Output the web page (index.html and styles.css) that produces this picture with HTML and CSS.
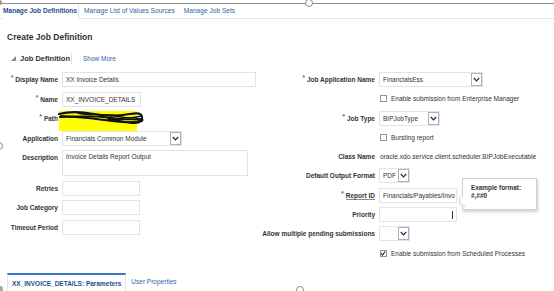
FILE: index.html
```html
<!DOCTYPE html>
<html>
<head>
<meta charset="utf-8">
<link rel="stylesheet" href="styles.css">
</head>
<body>
<div class="page">
  <div class="splitter"><span class="knob knob-top"></span></div>
  <span class="corner-mark"></span>
  <nav class="tabs">
    <a class="tab active">Manage Job Definitions</a>
    <a class="tab">Manage List of Values Sources</a>
    <a class="tab tab-last">Manage Job Sets</a>
  </nav>

  <h1 class="title">Create Job Definition</h1>

  <div class="section-head">
    <svg class="disclosure" width="5" height="5" viewBox="0 0 5 5"><polygon points="5,0 5,5 0,5" fill="#8a8a8a"/></svg>
    <span class="section-title">Job Definition</span>
    <span class="focus-bar"></span>
    <a class="link show-more">Show More</a>
  </div>

  <div class="form">
    <div class="grid grid-left">
      <label class="lbl"><span class="req">*</span>Display Name</label>
      <div class="input w194">XX Invoice Details</div>

      <label class="lbl"><span class="req">*</span>Name</label>
      <div class="input w79">XX_INVOICE_DETAILS</div>

      <label class="lbl"><span class="req">*</span>Path</label>
      <div class="redact">
        <svg width="86" height="22" viewBox="0 0 86 22">
          <rect x="1" y="1" width="78" height="20" fill="#ffff00"/>
          <path d="M1 4 C 12 1, 25 2, 36 4 S 60 6, 72 4 S 84 5, 84 8 S 78 13, 64 12 S 40 9, 30 8 S 10 6, 2 7" fill="none" stroke="#111" stroke-width="2.2" stroke-linecap="round"/>
          <path d="M3 6 C 15 8, 30 5, 45 7 S 70 10, 80 9 S 82 14, 74 13 S 60 10, 50 9" fill="none" stroke="#111" stroke-width="1.8" stroke-linecap="round"/>
          <path d="M20 3 C 30 6, 44 3, 58 6 S 76 8, 83 6" fill="none" stroke="#111" stroke-width="1.6" stroke-linecap="round"/>
        </svg>
      </div>

      <label class="lbl">Application</label>
      <div class="select w120">
        <span class="sel-text">Financials Common Module</span>
        <span class="sel-btn"><svg width="7" height="5" viewBox="0 0 7 5"><polyline points="0.8,1 3.5,3.8 6.2,1" fill="none" stroke="#1c2b45" stroke-width="1.2"/></svg></span>
      </div>

      <label class="lbl">Description</label>
      <div class="input textarea w186">Invoice Details Report Output</div>

      <label class="lbl">Retries</label>
      <div class="input w78"></div>

      <label class="lbl">Job Category</label>
      <div class="input w78"></div>

      <label class="lbl">Timeout Period</label>
      <div class="input w78"></div>
    </div>

    <div class="grid grid-right">
      <label class="lbl"><span class="req">*</span>Job Application Name</label>
      <div class="select w104">
        <span class="sel-text">FinancialsEss</span>
        <span class="sel-btn"><svg width="7" height="5" viewBox="0 0 7 5"><polyline points="0.8,1 3.5,3.8 6.2,1" fill="none" stroke="#1c2b45" stroke-width="1.2"/></svg></span>
      </div>

      <span class="lbl"></span>
      <label class="check"><span class="box"></span>Enable submission from Enterprise Manager</label>

      <label class="lbl"><span class="req">*</span>Job Type</label>
      <div class="select w61">
        <span class="sel-text">BIPJobType</span>
        <span class="sel-btn"><svg width="7" height="5" viewBox="0 0 7 5"><polyline points="0.8,1 3.5,3.8 6.2,1" fill="none" stroke="#1c2b45" stroke-width="1.2"/></svg></span>
      </div>

      <span class="lbl"></span>
      <label class="check"><span class="box"></span>Bursting report</label>

      <label class="lbl">Class Name</label>
      <div class="value">oracle.xdo.service.client.scheduler.BIPJobExecutable</div>

      <label class="lbl">Default Output Format</label>
      <div class="select w31">
        <span class="sel-text">PDF</span>
        <span class="sel-btn"><svg width="7" height="5" viewBox="0 0 7 5"><polyline points="0.8,1 3.5,3.8 6.2,1" fill="none" stroke="#1c2b45" stroke-width="1.2"/></svg></span>
      </div>

      <label class="lbl"><span class="req">*</span><span class="help">Report ID</span></label>
      <div class="input w78">Financials/Payables/Invo</div>

      <label class="lbl">Priority</label>
      <div class="input w78 caret-field"><span class="caret"></span></div>

      <label class="lbl">Allow multiple pending submissions</label>
      <div class="select w31">
        <span class="sel-text"></span>
        <span class="sel-btn"><svg width="7" height="5" viewBox="0 0 7 5"><polyline points="0.8,1 3.5,3.8 6.2,1" fill="none" stroke="#1c2b45" stroke-width="1.2"/></svg></span>
      </div>

      <span class="lbl"></span>
      <label class="check"><span class="box checked"><svg width="7" height="7" viewBox="0 0 7 7"><polyline points="1.2,3.4 2.9,5.3 6,1.2" fill="none" stroke="#222" stroke-width="1.3"/></svg></span>Enable submission from Scheduled Processes</label>
    </div>
  </div>

  <nav class="subtabs">
    <a class="subtab active">XX_INVOICE_DETAILS: Parameters</a>
    <a class="subtab">User Properties</a>
  </nav>

  <div class="tooltip">
    <div>Example format:</div>
    <div>#,##0</div>
  </div>

  <span class="knob knob-left"></span>
  <span class="knob knob-bottom"></span>
  <span class="corner-bottom"></span>
</div>
</body>
</html>
```

FILE: styles.css
```css
html, body {
  margin: 0;
  padding: 0;
  background: #ffffff;
}

body {
  font-family: "Liberation Sans", Arial, sans-serif;
  font-size: 6.5px;
  color: #333333;
  overflow: hidden;
}

.page {
  position: relative;
  width: 554px;
  height: 291px;
  overflow: hidden;
}

a {
  text-decoration: none;
  cursor: pointer;
}

/* top splitter */
.splitter {
  position: relative;
  height: 1px;
  margin-top: 3px;
  background: #8c8c8c;
}

.knob {
  position: absolute;
  width: 6px;
  height: 6px;
  border: 1.3px solid #8c8c8c;
  border-radius: 50%;
  background: #ffffff;
}

.knob-top {
  left: 305px;
  top: -4px;
}

.knob-left {
  left: -5px;
  top: 142px;
}

.knob-bottom {
  left: 296px;
  top: 286px;
}

.corner-mark {
  position: absolute;
  left: 0;
  top: 0;
  width: 2px;
  height: 5px;
  background: #9a9a9a;
  border-radius: 0 2px 2px 0;
}

.corner-bottom {
  position: absolute;
  left: -2px;
  top: 286px;
  width: 5px;
  height: 6px;
  background: #a8a8a8;
  border-radius: 3px 3px 0 0;
}

/* top tabs */
.tabs {
  display: flex;
  height: 14px;
  padding-left: 3px;
  border-bottom: 1px solid #e4e6ee;
}

.tab {
  display: flex;
  align-items: center;
  padding-bottom: 1px;
  color: #2b67a8;
  font-size: 6.6px;
  white-space: nowrap;
}

.tab.active {
  color: #1f4f8a;
  font-weight: bold;
  padding-right: 1px;
  border-right: 1px solid #dfe2ea;
  border-bottom: 1px solid #ffffff;
  margin-bottom: -1px;
}

.tab + .tab {
  margin-left: 5px;
}

.tab.tab-last {
  margin-left: 9px;
}

/* title */
.title {
  margin: 12px 0 0 7px;
  font-size: 8.5px;
  line-height: 12px;
  font-weight: bold;
  color: #333333;
}

/* section header */
.section-head {
  display: flex;
  align-items: center;
  height: 12px;
  margin-top: 9px;
  padding-left: 11px;
}

.disclosure {
  margin-right: 4px;
  margin-top: 1px;
}

.section-title {
  font-size: 7.5px;
  font-weight: bold;
  color: #2f2f2f;
}

.focus-bar {
  width: 1px;
  height: 11px;
  margin-left: 1px;
  background: #e6dfc4;
}

.link {
  color: #2b67a8;
}

.show-more {
  margin-left: 11px;
  font-size: 6.5px;
}

/* form */
.form {
  display: flex;
  margin-top: 8px;
  height: 189px;
}

.grid {
  display: grid;
  column-gap: 4px;
  align-content: start;
  align-items: start;
}

.grid-left {
  width: 258px;
  grid-template-columns: 58px auto;
  row-gap: 4.5px;
}

.grid-right {
  grid-template-columns: 117px auto;
  row-gap: 4.3px;
}

.lbl {
  display: block;
  text-align: right;
  font-weight: bold;
  font-size: 6.5px;
  line-height: 15px;
  color: #333333;
  white-space: nowrap;
}

.req {
  color: #3d7fc3;
  font-size: 7px;
  font-weight: bold;
  position: relative;
  top: -2px;
  margin-right: 2px;
}

.help {
  border-bottom: 1px solid #8a8a8a;
  padding-bottom: 0;
}

.input {
  box-sizing: border-box;
  height: 15px;
  border: 1px solid #dfe3ea;
  background: #ffffff;
  padding-left: 3px;
  line-height: 13px;
  font-size: 6.5px;
  color: #333333;
  white-space: nowrap;
  overflow: hidden;
}

.input.textarea {
  height: 26px;
  line-height: 12px;
}

.caret-field {
  display: flex;
  justify-content: flex-end;
  align-items: center;
}

.caret {
  width: 1px;
  height: 8px;
  background: #333333;
  margin-right: 3px;
}

.w194 { width: 194px; }
.w186 { width: 186px; }
.w120 { width: 120px; }
.w104 { width: 104px; }
.w79 { width: 79px; }
.w78 { width: 78px; }
.w61 { width: 61px; }
.w31 { width: 31px; }

.redact {
  height: 15px;
  margin-left: -4px;
  margin-top: -1px;
}

.redact svg {
  display: block;
}

.select {
  box-sizing: border-box;
  display: flex;
  height: 15px;
  border: 1px solid #dfe3ea;
  background: #ffffff;
}

.sel-text {
  flex: 1;
  padding-left: 3px;
  line-height: 13px;
  font-size: 6.5px;
  color: #333333;
  white-space: nowrap;
  overflow: hidden;
}

.sel-btn {
  box-sizing: border-box;
  width: 11px;
  height: 13px;
  border: 1px solid #a9b1bd;
  display: flex;
  align-items: center;
  justify-content: center;
  background: #ffffff;
}

.check {
  display: flex;
  align-items: center;
  height: 15px;
  padding-left: 1px;
  font-size: 6.5px;
  color: #333333;
  white-space: nowrap;
}

.box {
  box-sizing: border-box;
  width: 7px;
  height: 7px;
  border: 1px solid #8f959e;
  background: #ffffff;
  margin-right: 4px;
  display: flex;
}

.box.checked svg {
  margin: -1px 0 0 -1px;
}

.value {
  line-height: 15px;
  padding-left: 1px;
  font-size: 6.6px;
  color: #333333;
  white-space: nowrap;
}

/* bottom tabs */
.subtabs {
  display: flex;
  align-items: stretch;
  height: 20px;
  margin-top: 12px;
  padding-left: 7px;
}

.subtab {
  display: flex;
  align-items: center;
  padding-bottom: 3px;
  color: #2b67a8;
  font-size: 6.5px;
  white-space: nowrap;
}

.subtab.active {
  box-sizing: border-box;
  padding: 0 4px 2px 4px;
  border-top: 2px solid #3a78c2;
  border-left: 1px solid #e0e3ea;
  border-right: 1px solid #e0e3ea;
  color: #1f4f8a;
  font-weight: bold;
}

.subtab + .subtab {
  margin-left: 5px;
}

/* tooltip */
.tooltip {
  position: absolute;
  left: 462px;
  top: 178px;
  width: 75px;
  height: 32px;
  box-sizing: border-box;
  padding: 5px 0 0 8px;
  background: #ffffff;
  border: 1px solid #d0d0d0;
  box-shadow: 1px 2px 3px rgba(0, 0, 0, 0.18);
  font-size: 6.4px;
  font-weight: bold;
  line-height: 7.5px;
  color: #333333;
}

.tooltip::before {
  content: "";
  position: absolute;
  left: -4px;
  top: 19px;
  width: 6px;
  height: 6px;
  background: #ffffff;
  border-left: 1px solid #d0d0d0;
  border-bottom: 1px solid #d0d0d0;
  transform: rotate(25deg) skewX(20deg);
}
```
